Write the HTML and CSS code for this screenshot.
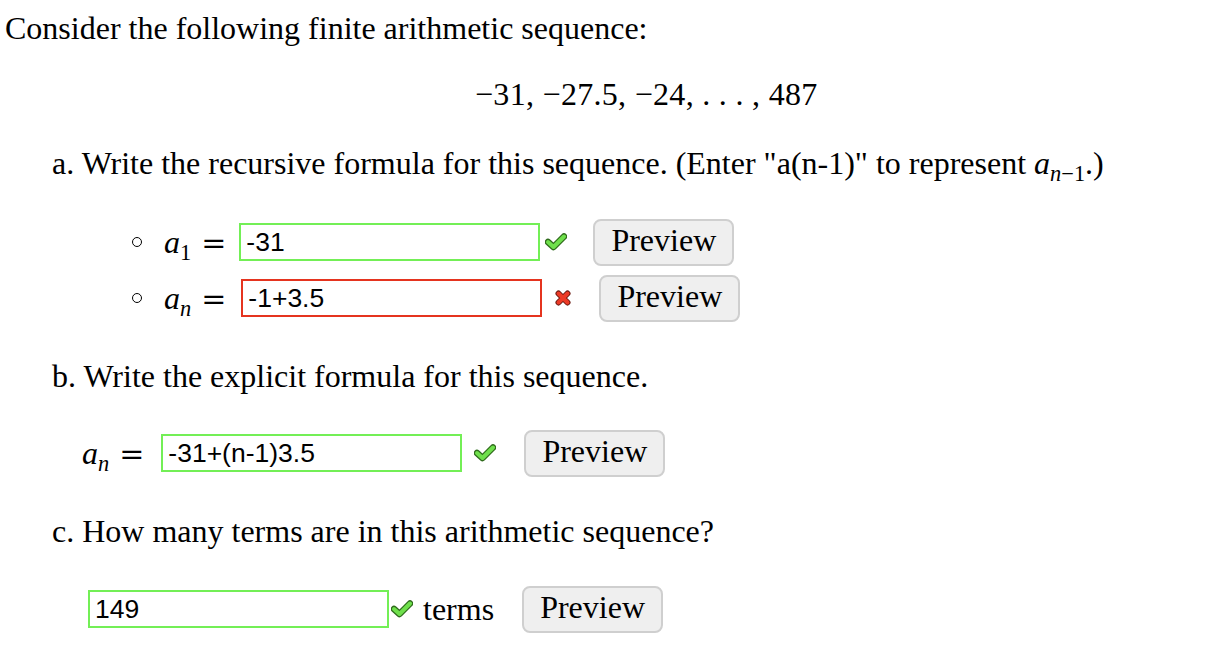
FILE: index.html
```html
<!DOCTYPE html>
<html>
<head>
<meta charset="utf-8">
<link rel="stylesheet" href="styles.css">
</head>
<body>
<div class="page">
  <p class="intro">Consider the following finite arithmetic sequence:</p>
  <p class="seq">−31, −27.5, −24, . . . , 487</p>
  <p class="q qa">a. Write the recursive formula for this sequence. (Enter "a(n-1)" to represent <span class="m"><i>a</i><sub><i>n</i>−1</sub></span>.)</p>
  <ul class="answers">
    <li class="ans">
      <span class="bullet"></span>
      <span class="m lhs l1"><i>a</i><sub>1</sub><span class="eq">=</span></span>
      <span class="input ok">-31</span>
      <span class="mark"><svg width="22" height="18" viewBox="0 0 22 18"><path d="M3 9 L8.5 14 L19 3.5" fill="none" stroke="#2f6b1c" stroke-width="6.5" stroke-linejoin="round" stroke-linecap="round"/><path d="M3 9 L8.5 14 L19 3.5" fill="none" stroke="#6fe04c" stroke-width="4" stroke-linejoin="round" stroke-linecap="round"/></svg></span>
      <span class="btn">Preview</span>
    </li>
    <li class="ans">
      <span class="bullet"></span>
      <span class="m lhs l2"><i>a</i><sub><i>n</i></sub><span class="eq">=</span></span>
      <span class="input bad">-1+3.5</span>
      <span class="mark x"><svg width="16" height="16" viewBox="0 0 16 16"><path d="M3.5 3.5 L12.5 12.5 M12.5 3.5 L3.5 12.5" fill="none" stroke="#6b1a12" stroke-width="6" stroke-linecap="round"/><path d="M3.5 3.5 L12.5 12.5 M12.5 3.5 L3.5 12.5" fill="none" stroke="#ec3a26" stroke-width="4" stroke-linecap="round"/></svg></span>
      <span class="btn">Preview</span>
    </li>
  </ul>
  <p class="q qb">b. Write the explicit formula for this sequence.</p>
  <div class="ans explicit">
    <span class="m lhs l3"><i>a</i><sub><i>n</i></sub><span class="eq">=</span></span>
    <span class="input ok">-31+(n-1)3.5</span>
    <span class="mark"><svg width="22" height="18" viewBox="0 0 22 18"><path d="M3 9 L8.5 14 L19 3.5" fill="none" stroke="#2f6b1c" stroke-width="6.5" stroke-linejoin="round" stroke-linecap="round"/><path d="M3 9 L8.5 14 L19 3.5" fill="none" stroke="#6fe04c" stroke-width="4" stroke-linejoin="round" stroke-linecap="round"/></svg></span>
    <span class="btn">Preview</span>
  </div>
  <p class="q qc">c. How many terms are in this arithmetic sequence?</p>
  <div class="ans count">
    <span class="input ok">149</span>
    <span class="mark tight"><svg width="22" height="18" viewBox="0 0 22 18"><path d="M3 9 L8.5 14 L19 3.5" fill="none" stroke="#2f6b1c" stroke-width="6.5" stroke-linejoin="round" stroke-linecap="round"/><path d="M3 9 L8.5 14 L19 3.5" fill="none" stroke="#6fe04c" stroke-width="4" stroke-linejoin="round" stroke-linecap="round"/></svg></span>
    <span class="unit">terms</span>
    <span class="btn">Preview</span>
  </div>
</div>
</body>
</html>
```
FILE: styles.css
```css
html, body {
  margin: 0;
  padding: 0;
  background: #fff;
}
.page {
  font-family: "Liberation Serif", "Times New Roman", serif;
  font-size: 32px;
  color: #000;
  padding: 8px 0 0 5px;
}
p { margin: 0; line-height: 40px; }
.intro { height: 40px; }
.seq {
  margin-top: 26px;
  padding-left: 470px;
  font-size: 32px;
  letter-spacing: 0.3px;
}
.q { padding-left: 47px; }
.qa { margin-top: 29px; }
.m i { font-style: italic; }
.m sub { font-size: 0.7em; vertical-align: -0.3em; line-height: 0; }
.answers {
  list-style: none;
  margin: 0;
  padding: 0 0 0 127px;
}
.ans {
  display: flex;
  align-items: center;
}
.answers .ans { height: 56px; }
.answers .ans:first-child { margin-top: 31px; }
.bullet {
  width: 8px; height: 8px;
  border: 1.6px solid #000;
  border-radius: 50%;
  margin-right: 22px;
}
.lhs { white-space: nowrap; }
.l1 { margin-right: 13px; }
.l2 { margin-right: 15px; }
.l3 { margin-right: 17px; }
.eq {
  margin-left: 10px;
  font-family: "DejaVu Serif", serif;
  font-size: 30px;
}
.input {
  box-sizing: border-box;
  width: 301px;
  height: 38px;
  border: 2px solid #73ef56;
  font-family: "Liberation Sans", Arial, sans-serif;
  font-size: 26.5px;
  line-height: 34px;
  padding-left: 5px;
  background: #fff;
}
.input.bad { border-color: #e5341f; }
.mark { display: flex; margin-left: 5px; width: 48px; }
.mark.x { margin-left: 13px; width: 44px; }
.mark.tight { margin-left: 2px; width: auto; }
.btn {
  box-sizing: border-box;
  width: 141px;
  height: 47px;
  border: 2px solid #cfcfcf;
  border-radius: 8px;
  background: #efefef;
  display: flex;
  align-items: center;
  justify-content: center;
  padding-bottom: 3px;
}
.qb { margin-top: 30px; }
.explicit { padding-left: 77px; margin-top: 32px; height: 50px; }
.explicit .mark { margin-left: 12px; width: 50px; }
.qc { margin-top: 33px; }
.count { padding-left: 83px; margin-top: 33px; height: 50px; }
.unit { margin-left: 10px; margin-right: 28px; }
```
